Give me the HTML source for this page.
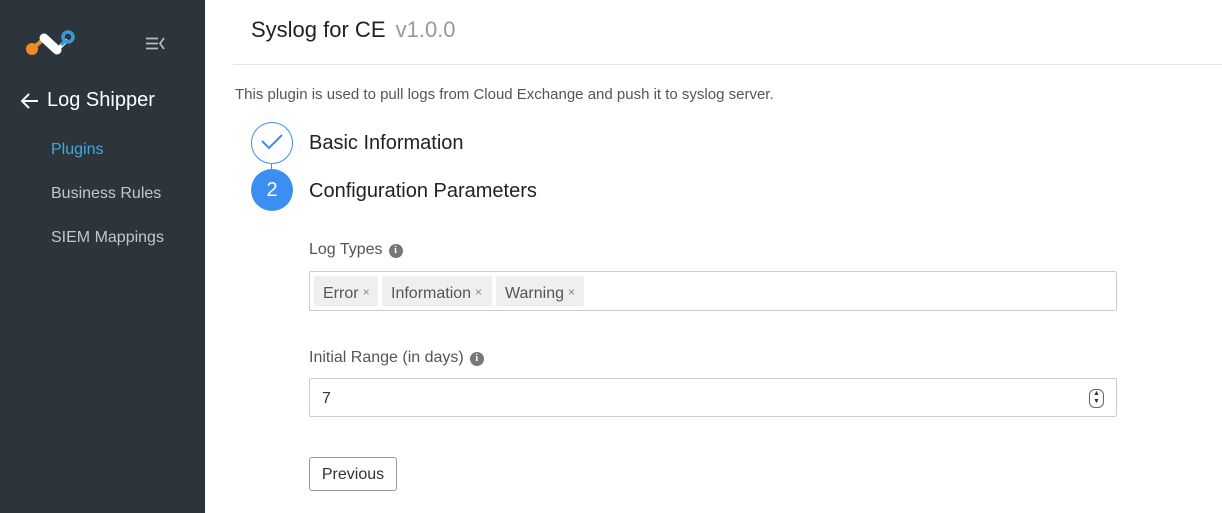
<!DOCTYPE html>
<html><head><style>
body{margin:0;width:1222px;height:513px;overflow:hidden;font-family:"Liberation Sans",sans-serif;background:#fff;position:relative}
.sb{position:absolute;left:0;top:0;width:205px;height:513px;background:#2c343c}
.a{position:absolute;white-space:nowrap}
.tag{position:absolute;top:276px;height:30px;background:#efefef;border-radius:2px;font-size:16px;color:#555;line-height:32px;padding-left:9px;box-sizing:border-box}
.tag span{font-size:12px;color:#888;margin-left:4px;vertical-align:2px}
.info{display:inline-block;width:14px;height:14px;border-radius:50%;background:#777;color:#fff;font-size:10px;font-weight:bold;text-align:center;line-height:14px;vertical-align:1px;margin-left:6px;font-family:"Liberation Serif",serif}
</style></head><body>
<div class="sb">
<svg class="a" style="left:26px;top:30px" width="50" height="27" viewBox="0 0 50 27">
<path d="M6 19 L19 8" stroke="#f08a24" stroke-width="4"/>
<circle cx="6" cy="19" r="6" fill="#f08a24"/>
<path d="M18 8 L31 20" stroke="#fff" stroke-width="9" stroke-linecap="round" fill="none"/>
<path d="M31 20 L40 11" stroke="#fff" stroke-width="4" stroke-linecap="round"/>
<circle cx="42" cy="7" r="5" fill="none" stroke="#3a9ad9" stroke-width="3.5"/>
<path d="M39 11 L35 15" stroke="#3a9ad9" stroke-width="3.5"/>
</svg>
<svg class="a" style="left:146px;top:37px" width="20" height="13" viewBox="0 0 20 13"><path d="M0 1.5H12M0 6.5H12M0 11.5H12M18 1L14 6.5L18 12" stroke="#b8bcc0" stroke-width="1.8" fill="none"/></svg>
<svg class="a" style="left:21px;top:93px" width="18" height="16" viewBox="0 0 18 16"><path d="M17 8H2M8 1L1 8L8 15" stroke="#fff" stroke-width="2" fill="none"/></svg>
<div class="a" style="left:47px;top:89px;font-size:20px;color:#fff">Log Shipper</div>
<div class="a" style="left:51px;top:141px;font-size:16px;color:#3fa9e0">Plugins</div>
<div class="a" style="left:51px;top:185px;font-size:16px;color:#c3c7cb">Business Rules</div>
<div class="a" style="left:51px;top:229px;font-size:16px;color:#c3c7cb">SIEM Mappings</div>
</div>
<div class="a" style="left:251px;top:17px;font-size:22px;color:#222">Syslog for CE <span style="color:#999;margin-left:4px">v1.0.0</span></div>
<div class="a" style="left:233px;top:64px;width:989px;height:1px;background:#e4e4e4"></div>
<div class="a" style="left:235px;top:86px;font-size:15px;color:#555">This plugin is used to pull logs from Cloud Exchange and push it to syslog server.</div>
<div class="a" style="left:251px;top:122px;width:40px;height:40px;border:1px solid #3b8ff0;border-radius:50%"></div>
<svg class="a" style="left:260px;top:133px" width="24" height="18"><path d="M2 8L9 15L22 2" stroke="#3b8ff0" stroke-width="2" fill="none"/></svg>
<div class="a" style="left:271px;top:163px;width:1px;height:6px;background:#3b8ff0"></div>
<div class="a" style="left:251px;top:169px;width:42px;height:42px;background:#3b8ff0;border-radius:50%;color:#fff;font-size:20px;text-align:center;line-height:42px">2</div>
<div class="a" style="left:309px;top:132px;font-size:20px;color:#222">Basic Information</div>
<div class="a" style="left:309px;top:180px;font-size:20px;color:#222">Configuration Parameters</div>
<div class="a" style="left:309px;top:241px;font-size:16px;color:#555">Log Types<span class="info">i</span></div>
<div class="a" style="left:309px;top:271px;width:806px;height:38px;border:1px solid #ccc;border-radius:2px"></div>
<div class="tag" style="left:314px;width:64px">Error<span>×</span></div>
<div class="tag" style="left:382px;width:110px">Information<span>×</span></div>
<div class="tag" style="left:496px;width:88px">Warning<span>×</span></div>
<div class="a" style="left:309px;top:349px;font-size:16px;color:#555">Initial Range (in days)<span class="info">i</span></div>
<div class="a" style="left:309px;top:378px;width:806px;height:37px;border:1px solid #ccc;border-radius:2px"></div>
<div class="a" style="left:322px;top:390px;font-size:16px;color:#333">7</div>
<div class="a" style="left:1089px;top:389px;width:13px;height:17px;border:1px solid #666;border-radius:6px;font-size:7px;line-height:8px;text-align:center;color:#333">▲<br>▼</div>
<div class="a" style="left:309px;top:457px;width:86px;height:32px;border:1px solid #999;border-radius:3px;font-size:16px;color:#333;text-align:center;line-height:33px">Previous</div>
</body></html>
